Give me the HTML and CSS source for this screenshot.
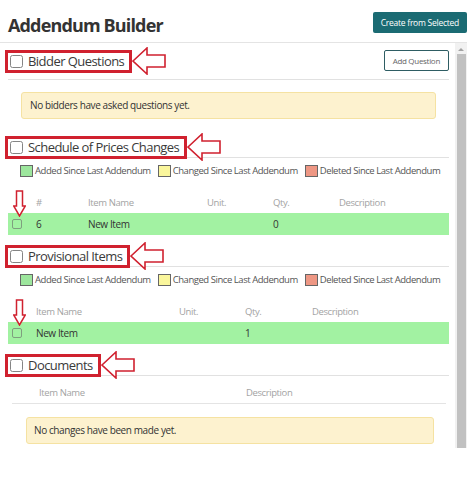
FILE: index.html
```html
<!DOCTYPE html>
<html lang="en">
<head>
<meta charset="utf-8">
<title>Addendum Builder</title>
<link rel="stylesheet" href="styles.css">
</head>
<body>
<header class="topbar">
  <h1 class="title">Addendum Builder</h1>
  <button class="btn-primary" type="button">Create from Selected</button>
</header>
<div class="panel">
  <div class="content">
    <section class="sec sec-first">
      <div class="sec-head">
        <div class="sec-title-wrap">
          <label class="callout"><span class="cb"></span><span class="sec-title">Bidder Questions</span></label>
          <svg class="arrow-left" width="34" height="28" viewBox="0 0 34 28"><polygon points="1,14 15,1 15,8 33,8 33,20 15,20 15,27" fill="#fff" stroke="#d0212f" stroke-width="1.6" stroke-linejoin="miter"/></svg>
        </div>
        <button class="btn-outline" type="button">Add Question</button>
      </div>
      <div class="alert alert-first">No bidders have asked questions yet.</div>
    </section>

    <section class="sec sec-sched">
      <div class="sec-head">
        <div class="sec-title-wrap">
          <label class="callout"><span class="cb"></span><span class="sec-title">Schedule of Prices Changes</span></label>
          <svg class="arrow-left" width="34" height="28" viewBox="0 0 34 28"><polygon points="1,14 15,1 15,8 33,8 33,20 15,20 15,27" fill="#fff" stroke="#d0212f" stroke-width="1.6"/></svg>
        </div>
      </div>
      <div class="legend">
        <span class="legend-item"><span class="sw sw-add"></span>Added Since Last Addendum</span>
        <span class="legend-item"><span class="sw sw-chg"></span>Changed Since Last Addendum</span>
        <span class="legend-item"><span class="sw sw-del"></span>Deleted Since Last Addendum</span>
      </div>
      <div class="tbl tbl-sched">
        <div class="tbl-row tbl-head">
          <span class="cell-cb"><svg class="arrow-down" width="13" height="27" viewBox="0 0 13 27"><polygon points="3.5,1 9.5,1 9.5,16 12.3,16 6.5,26 0.7,16 3.5,16" fill="#fff" stroke="#d0212f" stroke-width="1.5"/></svg></span>
          <span>#</span><span>Item Name</span><span>Unit.</span><span>Qty.</span><span>Description</span>
        </div>
        <div class="tbl-row tbl-body">
          <span class="cell-cb"><span class="rcb"></span></span>
          <span>6</span><span>New Item</span><span></span><span>0</span><span></span>
        </div>
      </div>
    </section>

    <section class="sec sec-prov">
      <div class="sec-head">
        <div class="sec-title-wrap">
          <label class="callout"><span class="cb"></span><span class="sec-title">Provisional Items</span></label>
          <svg class="arrow-left" width="34" height="28" viewBox="0 0 34 28"><polygon points="1,14 15,1 15,8 33,8 33,20 15,20 15,27" fill="#fff" stroke="#d0212f" stroke-width="1.6"/></svg>
        </div>
      </div>
      <div class="legend">
        <span class="legend-item"><span class="sw sw-add"></span>Added Since Last Addendum</span>
        <span class="legend-item"><span class="sw sw-chg"></span>Changed Since Last Addendum</span>
        <span class="legend-item"><span class="sw sw-del"></span>Deleted Since Last Addendum</span>
      </div>
      <div class="tbl tbl-prov">
        <div class="tbl-row tbl-head">
          <span class="cell-cb"><svg class="arrow-down" width="13" height="27" viewBox="0 0 13 27"><polygon points="3.5,1 9.5,1 9.5,16 12.3,16 6.5,26 0.7,16 3.5,16" fill="#fff" stroke="#d0212f" stroke-width="1.5"/></svg></span>
          <span>Item Name</span><span>Unit.</span><span>Qty.</span><span>Description</span>
        </div>
        <div class="tbl-row tbl-body">
          <span class="cell-cb"><span class="rcb"></span></span>
          <span>New Item</span><span></span><span>1</span><span></span>
        </div>
      </div>
    </section>

    <section class="sec sec-docs">
      <div class="sec-head">
        <div class="sec-title-wrap">
          <label class="callout"><span class="cb"></span><span class="sec-title">Documents</span></label>
          <svg class="arrow-left" width="34" height="28" viewBox="0 0 34 28"><polygon points="1,14 15,1 15,8 33,8 33,20 15,20 15,27" fill="#fff" stroke="#d0212f" stroke-width="1.6"/></svg>
        </div>
      </div>
      <div class="doc-head">
        <span>Item Name</span><span>Description</span>
      </div>
      <div class="alert alert-docs">No changes have been made yet.</div>
    </section>
  </div>
  <div class="scrollbar">
    <div class="sb-up"></div>
    <div class="sb-thumb"></div>
  </div>
</div>
</body>
</html>
```

FILE: styles.css
```css
* { box-sizing: border-box; }

body {
  margin: 0;
  width: 474px;
  background: #fff;
  color: #333;
  font-family: "Open Sans", "Noto Sans", sans-serif;
}

.topbar {
  display: flex;
  justify-content: space-between;
  align-items: flex-start;
  height: 42px;
  padding: 12px 7px 0 8px;
}

.title {
  margin: 1px 0 0;
  font-size: 18px;
  font-weight: 700;
  line-height: 24px;
  letter-spacing: -0.85px;
  color: #333;
}

.btn-primary {
  height: 21px;
  padding: 0 8px;
  background: #1b6b73;
  color: #fff;
  border: 0;
  border-radius: 2px;
  font-family: "Open Sans", sans-serif;
  font-size: 8.5px;
  line-height: 21px;
  letter-spacing: -0.25px;
}

.panel {
  display: flex;
  width: 467px;
  height: 406px;
  border-top: 1px solid #e4e4e4;
}

.content {
  width: 455px;
  overflow: hidden;
}

.scrollbar {
  width: 12px;
  background: #f1f1f1;
  display: flex;
  flex-direction: column;
  align-items: center;
}

.sb-up {
  width: 0;
  height: 0;
  border-left: 3px solid transparent;
  border-right: 3px solid transparent;
  border-bottom: 3px solid #a3a3a3;
  margin-top: 5px;
}

.sb-thumb {
  width: 9px;
  flex: 1;
  margin: 3px 0 0 1px;
  background: #c1c1c1;
}

.sec {
  margin: 0 6px 0 8px;
}

.sec-sched { margin-top: 17px; }
.sec-prov { margin-top: 10px; }
.sec-docs { margin-top: 10px; }

.sec-head {
  display: flex;
  align-items: center;
  justify-content: space-between;
  border-bottom: 1px solid #e1e1e1;
}

.sec-first .sec-head {
  padding: 7px 0 8px;
}

.sec-title-wrap {
  display: flex;
  align-items: center;
}

.callout {
  display: flex;
  align-items: center;
  gap: 5px;
  height: 23px;
  padding: 0 5px 0 2px;
  border: 3px solid #d0212f;
  margin: 0 0 -2px -3px;
  background: #fff;
}

.cb {
  width: 13px;
  height: 13px;
  border: 1px solid #858585;
  border-radius: 2.5px;
  background: #fff;
}

.sec-title {
  font-size: 13px;
  line-height: 17px;
  letter-spacing: -0.55px;
  color: #3a3a3a;
}

.arrow-left {
  display: block;
  margin: -4px 0;
}

.btn-outline {
  height: 21px;
  padding: 0 8px;
  background: #fff;
  border: 1px solid #2e5d63;
  border-radius: 2px;
  color: #666;
  font-family: "Open Sans", sans-serif;
  font-size: 8px;
  line-height: 19px;
  letter-spacing: -0.3px;
}

.alert {
  padding: 6px 8px;
  font-size: 10px;
  line-height: 13px;
  letter-spacing: -0.4px;
  color: #333;
  background: #fdf2cf;
  border: 1px solid #f5e2a2;
  border-radius: 3px;
}

.alert-first {
  margin: 12px 13px 0;
}

.alert-docs {
  margin: 13px 15px 0 18px;
  padding: 6px 7px;
}

.legend {
  display: flex;
  gap: 7px;
  margin-top: 6px;
  padding-left: 12px;
  font-size: 9.5px;
  line-height: 14px;
  letter-spacing: -0.45px;
  color: #555;
}

.legend-item {
  display: flex;
  align-items: center;
  gap: 2px;
}

.sw {
  width: 13px;
  height: 12px;
  border: 1px solid #666;
}

.sw-add { background: #9de69d; }
.sw-chg { background: #faf69c; }
.sw-del { background: #ee9784; }

.tbl {
  margin-top: 13px;
}

.tbl-row {
  display: grid;
  height: 22px;
  align-items: center;
}

.tbl-sched .tbl-row {
  grid-template-columns: 28px 52px 119px 66px 66px 1fr;
}

.tbl-prov .tbl-row {
  grid-template-columns: 28px 143px 66px 67px 1fr;
}

.tbl-head {
  font-size: 9.5px;
  letter-spacing: -0.4px;
  color: #a3a3a3;
}

.tbl-body {
  background: #a2f2a2;
  font-size: 10px;
  letter-spacing: -0.4px;
  color: #333;
}

.cell-cb {
  position: relative;
  height: 100%;
  display: flex;
  align-items: center;
  padding-left: 4px;
}

.arrow-down {
  position: absolute;
  left: 5px;
  top: -1px;
  z-index: 2;
}

.rcb {
  width: 10px;
  height: 10px;
  border: 1px solid #7f9f7f;
  border-radius: 2px;
}

.doc-head {
  display: grid;
  grid-template-columns: 207px 1fr;
  height: 28px;
  margin: 0 3px 0 4px;
  padding: 6px 0 0 27px;
  border-bottom: 1px solid #e4e4e4;
  font-size: 9.5px;
  line-height: 22px;
  letter-spacing: -0.4px;
  color: #a3a3a3;
}
```
